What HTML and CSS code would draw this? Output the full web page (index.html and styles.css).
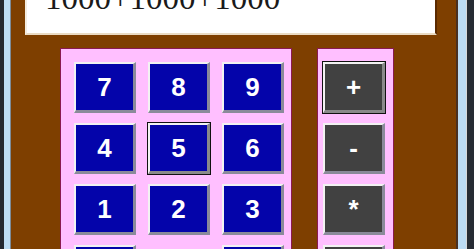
FILE: index.html
```html
<!DOCTYPE html>
<html>
<head>
<meta charset="utf-8">
<link rel="stylesheet" href="styles.css">
</head>
<body>
<div class="window">
  <div class="edge edge-left"></div>
  <div class="calc">
    <div class="display">1000+1000+1000</div>
    <div class="pads">
      <div class="panel keypad">
        <button class="key">7</button>
        <button class="key">8</button>
        <button class="key">9</button>
        <button class="key">4</button>
        <button class="key focus">5</button>
        <button class="key">6</button>
        <button class="key">1</button>
        <button class="key">2</button>
        <button class="key">3</button>
        <button class="key">0</button>
        <span class="blank"></span>
        <button class="key">=</button>
      </div>
      <div class="panel ops">
        <button class="key op focus">+</button>
        <button class="key op">-</button>
        <button class="key op">*</button>
        <button class="key op">/</button>
      </div>
    </div>
  </div>
  <div class="edge edge-right"></div>
</div>
</body>
</html>
```
FILE: styles.css
```css
html, body {
  margin: 0;
  padding: 0;
  width: 474px;
  height: 249px;
  overflow: hidden;
  background: #262b33;
}

.window {
  display: flex;
  width: 474px;
  height: 249px;
  overflow: hidden;
}

.edge {
  flex: none;
  height: 100%;
  box-sizing: border-box;
}

.edge-left {
  width: 11px;
  border-left: 4px solid #232830;
  border-right: 1px solid #7d8c99;
  background: #bcdcf4;
}

.edge-right {
  width: 18px;
  border-left: 2px solid #4a3020;
  border-right: 7px solid #262b33;
  background: linear-gradient(to right, #bcdcf4 0, #bcdcf4 8px, #d8d8d8 8px);
}

.calc {
  flex: none;
  width: 445px;
  height: 100%;
  background: #7e3f00;
  display: flex;
  flex-direction: column;
  overflow: hidden;
}

.display {
  flex: none;
  margin: -30px 0 0 14px;
  width: 412px;
  height: 65px;
  box-sizing: border-box;
  background: #ffffff;
  border-style: solid;
  border-width: 2px;
  border-color: #5a2a00 #5a2a00 #eadbc3 #f4ece0;
  padding: 10px 0 0 18px;
  font-family: "Liberation Serif", "Times New Roman", serif;
  font-size: 33px;
  line-height: 33px;
  color: #1a1a1a;
}

.pads {
  flex: none;
  display: flex;
  gap: 25px;
  margin: 13px 0 0 49px;
  align-items: flex-start;
}

.panel {
  flex: none;
  background: #ffbfff;
  border: 1px solid #8a1a50;
  box-sizing: border-box;
  display: grid;
  grid-auto-rows: 51px;
  row-gap: 10px;
  height: 240px;
}

.keypad {
  width: 232px;
  padding: 13px 0 0 13px;
  grid-template-columns: repeat(3, 62px);
  column-gap: 12px;
}

.ops {
  width: 77px;
  padding: 13px 0 0 5px;
  grid-template-columns: 62px;
}

.key {
  margin: 0;
  padding: 0;
  box-sizing: border-box;
  width: 62px;
  height: 51px;
  background: #0404aa;
  color: #ffffff;
  font-family: "Liberation Sans", Arial, sans-serif;
  font-weight: bold;
  font-size: 26px;
  line-height: 1;
  border-style: solid;
  border-width: 2px 3px 3px 2px;
  border-color: #f2f2f2 #8a8a9a #8a8a9a #f2f2f2;
}

.key.op {
  background: #414141;
}

.key.focus {
  outline: 1px solid #111111;
  outline-offset: 0;
  border-color: #f2f2f2 #8a8a8a #8a8a8a #f2f2f2;
}
```
